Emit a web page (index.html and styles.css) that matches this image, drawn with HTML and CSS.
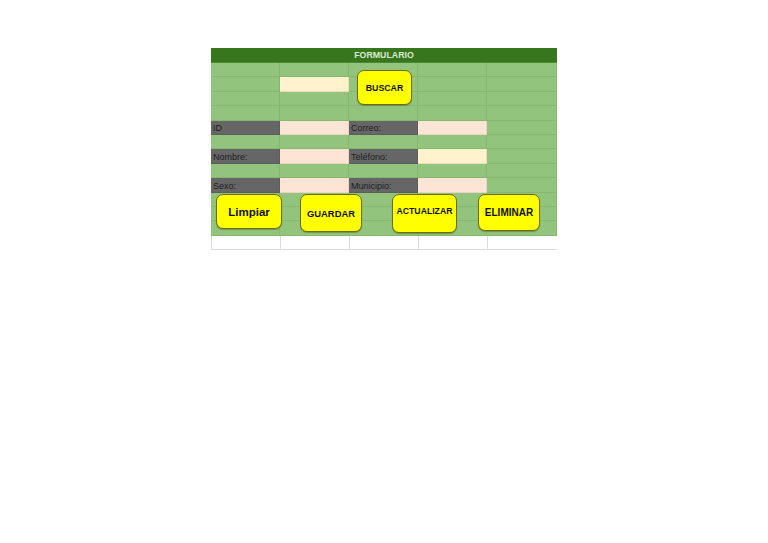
FILE: index.html
```html
<!DOCTYPE html>
<html>
<head>
<meta charset="utf-8">
<link rel="stylesheet" href="styles.css">
</head>
<body>
<div class="sheet">
  <div class="grid">
    <div class="hdr">FORMULARIO</div>

    <div class="c"></div><div class="c"></div><div class="c"></div><div class="c"></div><div class="c"></div>
    <div class="c"></div><div class="c cream"></div><div class="c"></div><div class="c"></div><div class="c"></div>
    <div class="c"></div><div class="c"></div><div class="c"></div><div class="c"></div><div class="c"></div>
    <div class="c"></div><div class="c"></div><div class="c"></div><div class="c"></div><div class="c"></div>

    <div class="c lbl">ID</div><div class="c peach"></div><div class="c lbl">Correo:</div><div class="c peach"></div><div class="c"></div>
    <div class="c"></div><div class="c"></div><div class="c"></div><div class="c"></div><div class="c"></div>
    <div class="c lbl">Nombre:</div><div class="c peach"></div><div class="c lbl">Teléfono:</div><div class="c cream"></div><div class="c"></div>
    <div class="c"></div><div class="c"></div><div class="c"></div><div class="c"></div><div class="c"></div>
    <div class="c lbl">Sexo:</div><div class="c peach"></div><div class="c lbl">Municipio:</div><div class="c peach"></div><div class="c"></div>

    <div class="c"></div><div class="c"></div><div class="c"></div><div class="c"></div><div class="c"></div>
    <div class="c"></div><div class="c"></div><div class="c"></div><div class="c"></div><div class="c"></div>
    <div class="c"></div><div class="c"></div><div class="c"></div><div class="c"></div><div class="c"></div>

    <div class="w"></div><div class="w"></div><div class="w"></div><div class="w"></div><div class="w"></div>
  </div>

  <div class="btn b-buscar">BUSCAR</div>
  <div class="btn b-limpiar">Limpiar</div>
  <div class="btn b-guardar">GUARDAR</div>
  <div class="btn b-actualizar">ACTUALIZAR</div>
  <div class="btn b-eliminar">ELIMINAR</div>
</div>
</body>
</html>
```

FILE: styles.css
```css
html, body {
  margin: 0;
  padding: 0;
  background: #ffffff;
}

body {
  font-family: "Liberation Sans", Arial, sans-serif;
}

.sheet {
  position: relative;
  width: 346px;
  margin-left: 211px;
  margin-top: 48px;
}

.grid {
  display: grid;
  grid-template-columns: 69px 69px 69px 69px 70px;
  grid-template-rows: 15px repeat(12, 14.42px) 14px;
  border-right: 1px solid #dcdcdc;
  width: 346px;
  box-sizing: border-box;
}

.hdr {
  grid-column: 1 / span 5;
  background: #38761d;
  color: #d9ead3;
  font-weight: bold;
  font-size: 8.8px;
  display: flex;
  align-items: center;
  justify-content: center;
  border-bottom: 1px solid #4b8a30;
  box-sizing: border-box;
}

.c {
  background: #93c47d;
  border-right: 1px solid #85b86e;
  border-bottom: 1px solid #85b86e;
  box-sizing: border-box;
  font-size: 9px;
  color: #1e1e1e;
  display: flex;
  align-items: flex-end;
  padding: 0 0 1px 2px;
  white-space: nowrap;
  overflow: visible;
}

.c.lbl {
  background: #666666;
  border-right-color: #5c5c5c;
  border-bottom-color: #5c5c5c;
}

.c.peach {
  background: #fce5d4;
  border-right-color: #e9d4c2;
  border-bottom-color: #e9d4c2;
}

.c.cream {
  background: #fff2cc;
  border-right-color: #eadfbb;
  border-bottom-color: #eadfbb;
}

.w {
  background: #ffffff;
  border-left: 1px solid #dcdcdc;
  border-bottom: 1px solid #dcdcdc;
  box-sizing: border-box;
}

.w:first-child {
  border-left: none;
}

.btn {
  position: absolute;
  background: #ffff00;
  border: 1px solid #6d6a1c;
  border-radius: 7px;
  box-sizing: border-box;
  box-shadow: 0 1px 1px rgba(60, 60, 0, 0.35);
  display: flex;
  align-items: center;
  justify-content: center;
  font-weight: bold;
  color: #111111;
  font-size: 10px;
}

.b-buscar {
  left: 146px;
  top: 22px;
  width: 55px;
  height: 35px;
  font-size: 8.8px;
}

.b-limpiar {
  left: 5px;
  top: 146px;
  width: 66px;
  height: 35px;
  font-size: 11.5px;
}

.b-guardar {
  left: 89px;
  top: 146px;
  width: 62px;
  height: 38px;
  font-size: 9.4px;
}

.b-actualizar {
  left: 181px;
  top: 146px;
  width: 65px;
  height: 39px;
  font-size: 8.7px;
  align-items: flex-start;
  padding-top: 11px;
}

.b-eliminar {
  left: 267px;
  top: 146px;
  width: 62px;
  height: 37px;
  font-size: 10px;
}
```
